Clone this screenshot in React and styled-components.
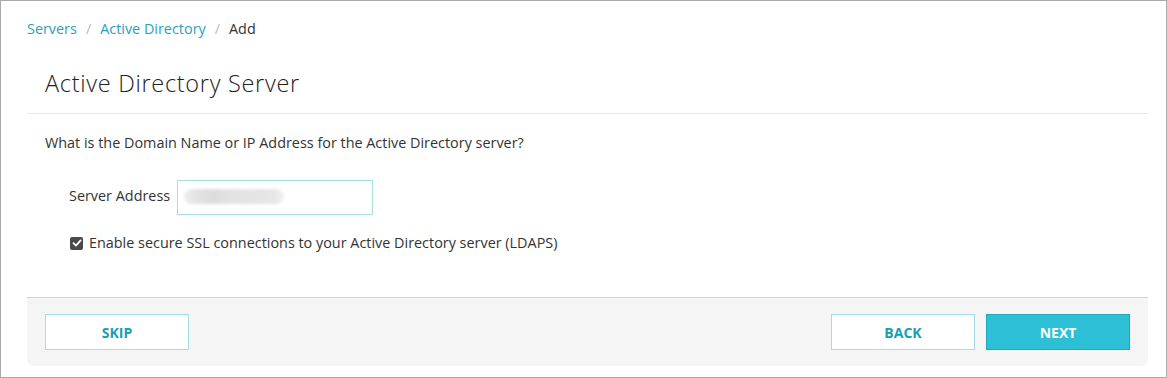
import styled, { createGlobalStyle } from "styled-components";

const GlobalStyle = createGlobalStyle`
  html, body {
    margin: 0;
    padding: 0;
    background: #fff;
  }
  body {
    font-family: "Open Sans", "Liberation Sans", sans-serif;
    color: #333;
  }
`;

const Frame = styled.div`
  box-sizing: border-box;
  width: 1167px;
  height: 378px;
  border: 1px solid #a9a9a9;
  padding: 0 18px 0 26px;
  background: #fff;
`;

const Crumbs = styled.nav`
  display: flex;
  align-items: center;
  padding-top: 17px;
  height: 22px;
  font-size: 14.4px;
  line-height: 22px;
`;

const Crumb = styled.a`
  color: ${(p) => (p.$current ? "#333" : "#2a9fb8")};
  text-decoration: none;
  cursor: ${(p) => (p.$current ? "default" : "pointer")};
`;

const Sep = styled.span`
  color: #bbb;
  margin: 0 9px;
`;

const Header = styled.div`
  padding: 29px 18px 16px;
  border-bottom: 1px solid #e8e8e8;
`;

const Title = styled.h1`
  margin: 0;
  font-family: "Open Sans", "Liberation Sans", sans-serif;
  font-weight: 300;
  font-size: 23.5px;
  letter-spacing: 0.7px;
  line-height: 28px;
  color: #222;
`;

const Body = styled.div`
  padding: 19px 18px 44px;
  font-size: 14.4px;
`;

const Question = styled.p`
  margin: 0;
  line-height: 20px;
`;

const FieldRow = styled.div`
  display: flex;
  align-items: center;
  gap: 7px;
  margin: 27px 0 0 24px;
`;

const Label = styled.label`
  line-height: 20px;
  padding-bottom: 3px;
`;

const Field = styled.div`
  box-sizing: border-box;
  width: 196px;
  height: 35px;
  border: 1px solid #a8dde5;
  display: flex;
  align-items: center;
  padding-left: 6px;
`;

const Redacted = styled.span`
  display: block;
  width: 100px;
  height: 15px;
  border-radius: 8px;
  background: linear-gradient(
    to right,
    #eeeeee 0%,
    #e4e4e4 10%,
    #dcdcdc 30%,
    #e2e2e2 45%,
    #e6e6e6 90%,
    #f2f2f2 100%
  );
  filter: blur(1.5px);
  margin-bottom: 2px;
`;

const CheckRow = styled.label`
  display: flex;
  align-items: center;
  gap: 6px;
  margin: 18px 0 0 25px;
  line-height: 20px;
  cursor: pointer;
`;

const Box = styled.span`
  width: 13px;
  height: 13px;
  border-radius: 2px;
  background: #4a4a4a;
  display: flex;
  align-items: center;
  justify-content: center;
  flex-shrink: 0;
`;

const Footer = styled.div`
  display: flex;
  align-items: center;
  gap: 11px;
  padding: 16px 18px;
  background: #f5f5f5;
  border-top: 1px solid #d2d2d2;
  border-radius: 0 0 7px 7px;
`;

const Spacer = styled.div`
  flex: 1;
`;

const Button = styled.button`
  box-sizing: border-box;
  width: 144px;
  height: 36px;
  font-family: "Open Sans", "Liberation Sans", sans-serif;
  font-weight: 700;
  font-size: 14px;
  text-transform: uppercase;
  cursor: pointer;
  color: ${(p) => (p.$primary ? "#fff" : "#1a9db3")};
  background: ${(p) => (p.$primary ? "#2cbfd6" : "#fff")};
  border: 1px solid ${(p) => (p.$primary ? "#20a8bd" : "#a6dbe3")};
`;

export default function App() {
  return (
    <>
      <GlobalStyle />
      <Frame>
        <Crumbs>
          <Crumb>Servers</Crumb>
          <Sep>/</Sep>
          <Crumb>Active Directory</Crumb>
          <Sep>/</Sep>
          <Crumb $current>Add</Crumb>
        </Crumbs>
        <Header>
          <Title>Active Directory Server</Title>
        </Header>
        <Body>
          <Question>
            What is the Domain Name or IP Address for the Active Directory server?
          </Question>
          <FieldRow>
            <Label>Server Address</Label>
            <Field>
              <Redacted />
            </Field>
          </FieldRow>
          <CheckRow>
            <Box>
              <svg width="10" height="10" viewBox="0 0 10 10">
                <path
                  d="M1.5 5.2 L4 7.6 L8.6 2.4"
                  fill="none"
                  stroke="#fff"
                  strokeWidth="1.8"
                  strokeLinecap="round"
                  strokeLinejoin="round"
                />
              </svg>
            </Box>
            Enable secure SSL connections to your Active Directory server (LDAPS)
          </CheckRow>
        </Body>
        <Footer>
          <Button>Skip</Button>
          <Spacer />
          <Button>Back</Button>
          <Button $primary>Next</Button>
        </Footer>
      </Frame>
    </>
  );
}
